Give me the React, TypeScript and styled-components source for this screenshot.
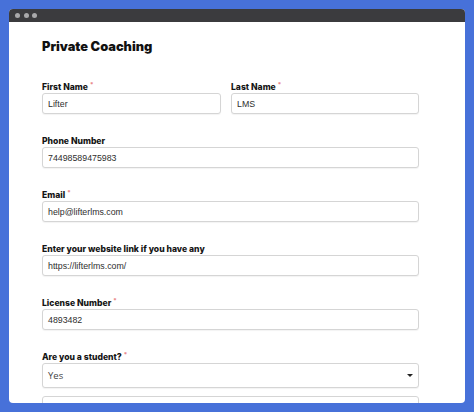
import React from 'react';
import styled, { createGlobalStyle } from 'styled-components';

const GlobalStyle = createGlobalStyle`
    html, body {
        margin: 0;
        padding: 0;
        background: #4771d9;
    }
    body {
        width: 474px;
        height: 412px;
        overflow: hidden;
    }
`;

interface IField {
    label: string;
    value: string;
    required?: boolean;
}

const fields: IField[] = [
    { label: 'Phone Number', value: '74498589475983' },
    { label: 'Email', value: 'help@lifterlms.com', required: true },
    { label: 'Enter your website link if you have any', value: 'https://lifterlms.com/' },
    { label: 'License Number', value: '4893482', required: true },
];

const App: React.FC = () => {
    return (
        <>
            <GlobalStyle />
            <Page>
                <Window>
                    <TitleBar>
                        <Dot />
                        <Dot />
                        <Dot />
                    </TitleBar>
                    <Content>
                        <Title>Private Coaching</Title>
                        <NameRow>
                            <Field>
                                <Label>
                                    First Name<Required>*</Required>
                                </Label>
                                <Input>Lifter</Input>
                            </Field>
                            <Field>
                                <Label>
                                    Last Name<Required>*</Required>
                                </Label>
                                <Input>LMS</Input>
                            </Field>
                        </NameRow>
                        {fields.map(f => (
                            <Field key={f.label}>
                                <Label>
                                    {f.label}
                                    {f.required && <Required>*</Required>}
                                </Label>
                                <Input>{f.value}</Input>
                            </Field>
                        ))}
                        <Field>
                            <Label>
                                Are you a student?<Required>*</Required>
                            </Label>
                            <Select>
                                Yes
                                <Caret />
                            </Select>
                        </Field>
                        <Input />
                    </Content>
                </Window>
            </Page>
        </>
    );
};

const Page = styled.div`
    padding: 9px 0 0 9px;
`;

const Window = styled.div`
    width: 456px;
    height: 394px;
    background: #ffffff;
    border-radius: 4px;
    overflow: hidden;
    display: flex;
    flex-direction: column;
`;

const TitleBar = styled.div`
    height: 13px;
    background: #3b3b3e;
    display: flex;
    align-items: center;
    gap: 3.5px;
    padding-left: 6px;
    flex-shrink: 0;
`;

const Dot = styled.span`
    width: 5px;
    height: 5px;
    border-radius: 50%;
    background: #a9a9ab;
`;

const Content = styled.div`
    padding: 17px 46px 0 33px;
    display: flex;
    flex-direction: column;
`;

const Title = styled.h1`
    margin: 0 0 26px;
    font-family: Inter, 'Noto Sans', sans-serif;
    font-weight: 900;
    font-size: 12.8px;
    line-height: 16px;
    color: #111;
`;

const NameRow = styled.div`
    display: grid;
    grid-template-columns: 179px 188px;
    gap: 10px;
`;

const Field = styled.div`
    display: flex;
    flex-direction: column;
    margin-bottom: 21px;
`;

const Label = styled.label`
    font-family: Inter, 'Noto Sans', sans-serif;
    font-weight: 800;
    font-size: 8.6px;
    line-height: 13px;
    color: #151515;
    display: flex;
`;

const Required = styled.span`
    color: #ea8a8c;
    font-size: 6px;
    line-height: 8px;
    margin-left: 2px;
`;

const Input = styled.div`
    box-sizing: border-box;
    height: 21px;
    margin-top: -1px;
    border: 1px solid #d5d5d5;
    border-radius: 3px;
    box-shadow: 0 1px 1px rgba(0, 0, 0, 0.05);
    padding: 0 5px;
    display: flex;
    align-items: center;
    font-family: 'Liberation Sans', Arial, sans-serif;
    font-size: 8.8px;
    color: #2e2e2e;
    background: #fff;
`;

const Select = styled(Input)`
    height: 25px;
    justify-content: space-between;
    font-family: 'Open Sans', sans-serif;
    font-size: 9.5px;
    color: #444;
    padding-right: 5px;
    margin-bottom: -12px;
`;

const Caret = styled.span`
    width: 0;
    height: 0;
    border-left: 3px solid transparent;
    border-right: 3px solid transparent;
    border-top: 3px solid #222;
`;

export default App;
